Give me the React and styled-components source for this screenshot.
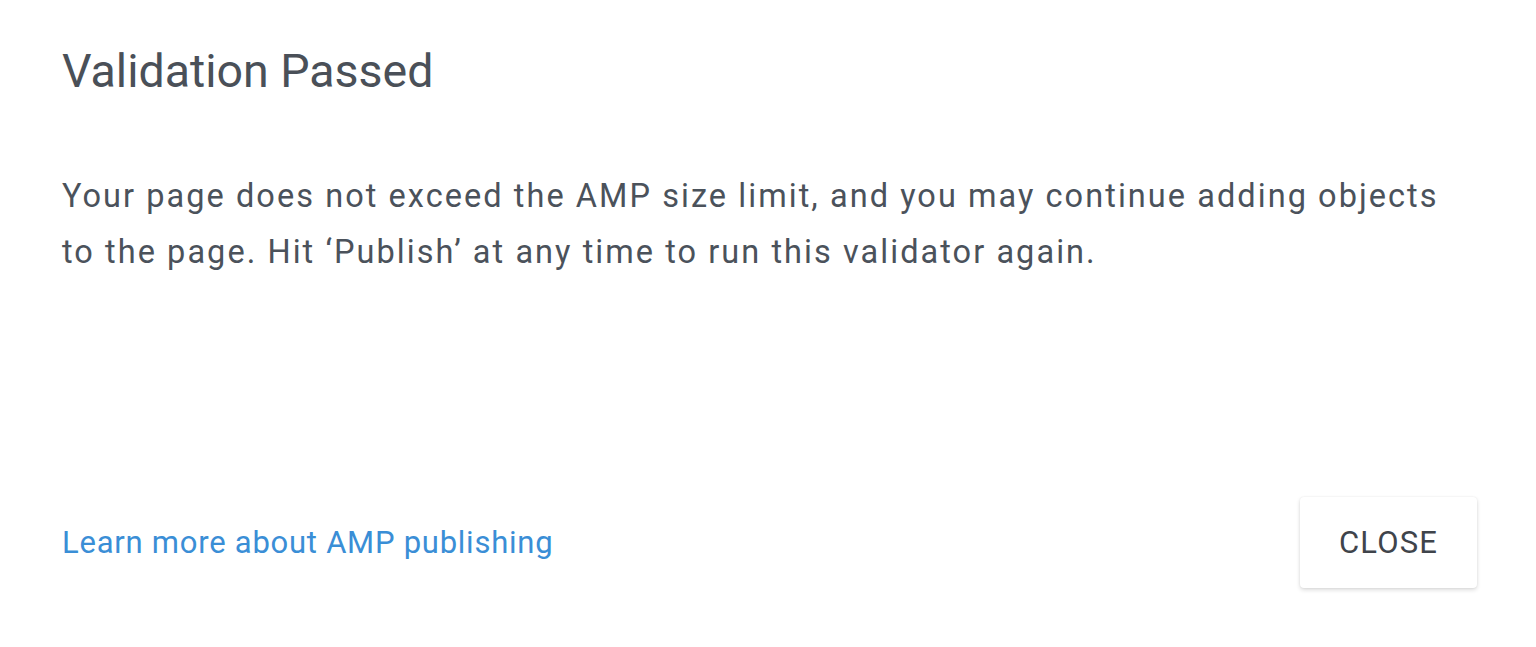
import React from "react";
import styled, { createGlobalStyle } from "styled-components";

const Global = createGlobalStyle`
  html, body {
    margin: 0;
    padding: 0;
    background: #ffffff;
  }
  body {
    font-family: Roboto, "Liberation Sans", Arial, sans-serif;
    -webkit-font-smoothing: antialiased;
  }
`;

const Dialog = styled.div`
  box-sizing: border-box;
  width: 1536px;
  height: 647px;
  padding: 43px 59px 0 62px;
  background: #ffffff;
  display: flex;
  flex-direction: column;
`;

const Title = styled.h2`
  margin: 0;
  font-size: 46.5px;
  line-height: 56px;
  font-weight: 400;
  color: #4a5058;
`;

const Body = styled.p`
  margin: 69px 0 0;
  font-size: 32.5px;
  line-height: 56px;
  letter-spacing: 2.05px;
  font-weight: 400;
  color: #4b525b;
  max-width: 1420px;
`;

const Footer = styled.div`
  margin-top: 217px;
  display: flex;
  align-items: center;
  justify-content: space-between;
`;

const Link = styled.a`
  font-size: 31px;
  line-height: 36px;
  letter-spacing: 0.75px;
  color: #3a8ed6;
  text-decoration: none;
  cursor: pointer;
`;

const Button = styled.button`
  box-sizing: border-box;
  width: 177px;
  height: 91px;
  border: none;
  border-radius: 4px;
  background: #ffffff;
  font-family: Roboto, "Liberation Sans", Arial, sans-serif;
  font-size: 31px;
  font-weight: 400;
  letter-spacing: 1.2px;
  color: #3f444b;
  box-shadow: 0 2px 4px rgba(0, 0, 0, 0.14), 0 0 2px rgba(0, 0, 0, 0.08);
  cursor: pointer;
`;

export default function App() {
  return (
    <>
      <Global />
      <Dialog>
        <Title>Validation Passed</Title>
        <Body>
          Your page does not exceed the AMP size limit, and you may continue adding objects
          to the page. Hit ‘Publish’ at any time to run this validator again.
        </Body>
        <Footer>
          <Link>Learn more about AMP publishing</Link>
          <Button>CLOSE</Button>
        </Footer>
      </Dialog>
    </>
  );
}
